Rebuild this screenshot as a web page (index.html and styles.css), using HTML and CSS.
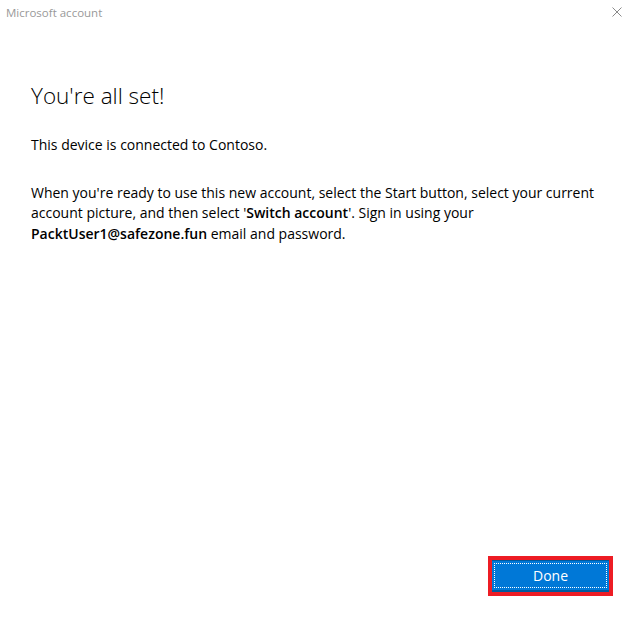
FILE: index.html
```html
<!DOCTYPE html>
<html>
<head>
	<meta charset="utf-8">
	<title>Microsoft account</title>
	<link rel="stylesheet" href="styles.css">
</head>
<body>

<div class="window">
	<div class="titlebar">
		<span class="title">Microsoft account</span>
		<span class="close">
			<svg width="10" height="10" viewBox="0 0 10 10"><path d="M0.5 0.5 L9.5 9.5 M9.5 0.5 L0.5 9.5" stroke="#8a8a8a" stroke-width="1"/></svg>
		</span>
	</div>

	<div class="content">
		<h1>You're all set!</h1>
		<p>This device is connected to Contoso.</p>
		<p>When you're ready to use this new account, select the Start button, select your current account picture, and then select '<b>Switch account</b>'. Sign in using your <b>PacktUser1@safezone.fun</b> email and password.</p>
	</div>

	<div class="footer">
		<div class="highlight">
			<a href="#" class="btn"><span>Done</span></a>
		</div>
	</div>
</div>

</body>
</html>
```

FILE: styles.css
```css
html, body {
	margin: 0;
	padding: 0;
	background: #fff;
}
.window {
	display: flex;
	flex-direction: column;
	width: 634px;
	height: 623px;
	font-family: "Open Sans", "Noto Sans", sans-serif;
	color: #000;
}
.titlebar {
	display: flex;
	justify-content: space-between;
	align-items: center;
	height: 24px;
	padding: 0 6px 0 6px;
}
.title {
	font-size: 11.5px;
	color: #999;
}
.close {
	display: flex;
	padding: 0 6px 0 0;
}
.content {
	flex: 1;
	padding: 56px 30px 0 31px;
}
h1 {
	margin: 0 0 23px;
	font-size: 22.5px;
	font-weight: 300;
	line-height: 32px;
}
p {
	margin: 0 0 27px;
	font-size: 14px;
	line-height: 20.5px;
}
p b {
	font-weight: 600;
}
.footer {
	display: flex;
	justify-content: flex-end;
	padding: 0 21px 27px 0;
}
.highlight {
	padding: 4px;
	background: #ed1c24;
}
.btn {
	display: block;
	width: 117px;
	height: 32px;
	padding: 2px;
	box-sizing: border-box;
	background: #0078d7;
	border-top: 1px solid #005a9e;
	border-bottom: 2px solid #005a9e;
	text-decoration: none;
}
.btn span {
	display: flex;
	justify-content: center;
	align-items: center;
	height: 100%;
	box-sizing: border-box;
	border: 1px dotted #fff;
	color: #fff;
	font-size: 14px;
}
```
